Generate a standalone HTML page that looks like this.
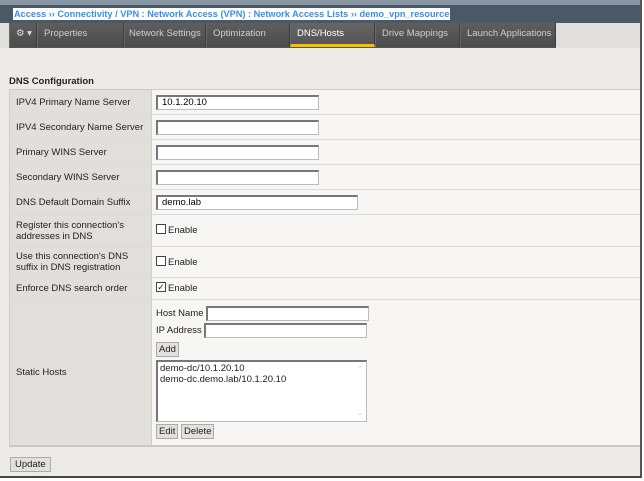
<!DOCTYPE html>
<html><head><meta charset="utf-8"><style>
*{box-sizing:border-box;margin:0;padding:0}
body{width:644px;height:481px;background:#fff;font-family:"Liberation Sans",Arial,sans-serif;font-size:9.5px;color:#222;position:relative;overflow:hidden}
.page{position:absolute;left:0;top:0;width:642px;height:478px;background:#ecebe7;border-right:2px solid #555;border-bottom:2px solid #444;overflow:hidden}
.top{position:absolute;left:0;top:0;width:640px;height:23px;background:#4b5866;border-top:5px solid #8996a3}
.crumb{position:absolute;left:13px;top:8px;height:12px;background:#fff;color:#3a8ee6;font-weight:bold;font-size:9.2px;line-height:12px;padding:0 1px;white-space:nowrap}
.tabs{position:absolute;left:9px;top:23px;height:25px;width:547px;background:#555}
.tabbg{position:absolute;left:0;top:23px;width:640px;height:25px;background:#e0dfdb}
.tab{position:absolute;top:0;height:24px;line-height:21px;color:#cfcfcf;font-size:9.5px;padding-left:6px;white-space:nowrap;overflow:hidden;background:linear-gradient(#5e5e5e,#4b4b4b);border-right:1px solid #3c3c3c;border-left:1px solid #6a6a6a}
.tab.act{color:#fff;background:linear-gradient(#666,#555);border-bottom:3px solid #f4c000}
h3{position:absolute;left:9px;top:76px;font-size:9.5px;font-weight:bold}
table{position:absolute;left:9px;top:89px;width:631px;border-collapse:collapse;background:#f7f6f4;border-top:1px solid #ccc;border-bottom:2px solid #c9c8c4}
td{border-bottom:1px solid #dcdbd7;vertical-align:middle;font-size:9.5px}
td.l{width:142px;background:#e0dfdb;padding-left:6px;border-right:1px solid #cfcec9;border-left:1px solid #ccc;line-height:11px}
td.v{padding-left:4px}
input.t{height:15px;border:1px solid #bbb;border-top:2px solid #777;border-left:2px solid #777;background:#fff;font:9.5px "Liberation Sans",sans-serif;padding-left:4px;display:block}
.cb{display:inline-block;width:10px;height:10px;border:1px solid #444;background:#fff;vertical-align:middle;position:relative;top:-1px;margin-right:2px}
.btn{display:inline-block;border:1px solid #aaa;background:#e2e1dd;padding:1px 2px;font-size:9.5px}
</style></head><body>
<div class="page">
<div class="top"></div>
<div class="crumb">Access &#8250;&#8250; Connectivity / VPN : Network Access (VPN) : Network Access Lists &#8250;&#8250; demo_vpn_resource</div>
<div class="tabbg"></div>
<div class="tabs">
<div class="tab" style="left:0;width:28px;color:#ddd">&#9881; &#9662;</div>
<div class="tab" style="left:28px;width:87px">Properties</div>
<div class="tab" style="left:115px;width:82px;padding-left:4px">Network Settings</div>
<div class="tab" style="left:197px;width:84px">Optimization</div>
<div class="tab act" style="left:281px;width:85px">DNS/Hosts</div>
<div class="tab" style="left:366px;width:85px">Drive Mappings</div>
<div class="tab" style="left:451px;width:96px">Launch Applications</div>
</div>
<h3>DNS Configuration</h3>
<table>
<tr style="height:25px"><td class="l">IPV4 Primary Name Server</td><td class="v"><input class="t" style="width:163px" value="10.1.20.10"></td></tr>
<tr style="height:25px"><td class="l">IPV4 Secondary Name Server</td><td class="v"><input class="t" style="width:163px"></td></tr>
<tr style="height:25px"><td class="l">Primary WINS Server</td><td class="v"><input class="t" style="width:163px"></td></tr>
<tr style="height:25px"><td class="l">Secondary WINS Server</td><td class="v"><input class="t" style="width:163px"></td></tr>
<tr style="height:25px"><td class="l">DNS Default Domain Suffix</td><td class="v"><input class="t" style="width:202px" value="demo.lab"></td></tr>
<tr style="height:32px"><td class="l">Register this connection's<br>addresses in DNS</td><td class="v"><span class="cb"></span>Enable</td></tr>
<tr style="height:31px"><td class="l">Use this connection's DNS<br>suffix in DNS registration</td><td class="v"><span class="cb"></span>Enable</td></tr>
<tr style="height:22px"><td class="l">Enforce DNS search order</td><td class="v"><span class="cb" style="font-size:9px;line-height:8px;text-align:center">&#10003;</span>Enable</td></tr>
<tr style="height:146px"><td class="l">Static Hosts</td><td class="v">
<div style="line-height:17px">Host Name <input class="t" style="width:163px;display:inline-block;vertical-align:middle"></div>
<div style="line-height:18px">IP Address <input class="t" style="width:163px;display:inline-block;vertical-align:middle"></div>
<div style="margin-top:2px"><span class="btn">Add</span></div>
<div style="width:211px;height:62px;border:1px solid #bbb;border-top:2px solid #777;border-left:2px solid #777;background:#fff;margin-top:3px;padding:1px 2px;line-height:11px;position:relative">demo-dc/10.1.20.10<br>demo-dc.demo.lab/10.1.20.10<span style="position:absolute;right:3px;top:2px;color:#bbb;font-size:7px">&#8963;</span><span style="position:absolute;right:3px;bottom:2px;color:#bbb;font-size:7px">&#8964;</span></div>
<div style="margin-top:2px"><span class="btn">Edit</span> <span class="btn">Delete</span></div>
</td></tr>
</table>
<div class="btn" style="position:absolute;left:10px;top:457px;padding:1px 4px">Update</div>
</div>
</body></html>
